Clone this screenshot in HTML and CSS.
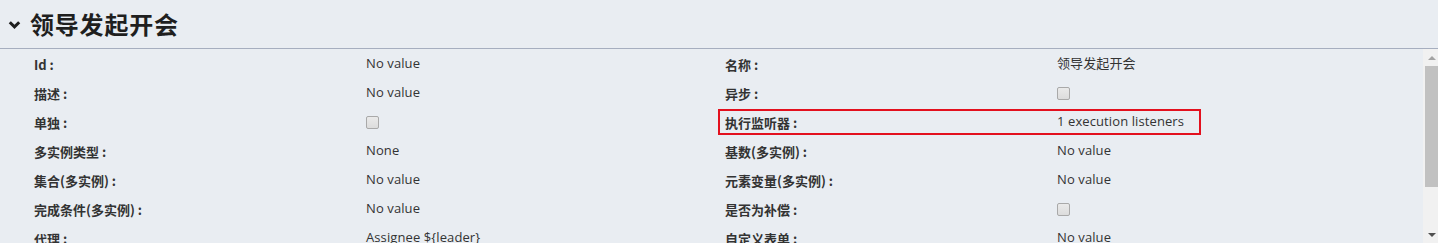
FILE: index.html
```html
<!DOCTYPE html>
<html lang="zh">
<head>
<meta charset="utf-8">
<title>领导发起开会</title>
<link rel="stylesheet" href="styles.css">
</head>
<body>
<div class="page">
  <header class="header">
    <svg class="chev" width="13" height="10" viewBox="0 0 13 10"><path d="M1.8 2.2 L6.5 6.9 L11.2 2.2" fill="none" stroke="#1e1e1e" stroke-width="3"/></svg>
    <h1 class="title">领导发起开会</h1>
  </header>
  <div class="body">
    <div class="content">
      <div class="grid">
        <div class="lab">Id :</div><div class="val">No value</div>
        <div class="lab">名称 :</div><div class="val cjk">领导发起开会</div>

        <div class="lab">描述 :</div><div class="val">No value</div>
        <div class="lab">异步 :</div><div class="val"><span class="cb"></span></div>

        <div class="lab">单独 :</div><div class="val"><span class="cb"></span></div>
        <div class="lab">执行监听器 :</div><div class="val">1 execution listeners</div>

        <div class="lab">多实例类型 :</div><div class="val">None</div>
        <div class="lab">基数(多实例) :</div><div class="val">No value</div>

        <div class="lab">集合(多实例) :</div><div class="val">No value</div>
        <div class="lab">元素变量(多实例) :</div><div class="val">No value</div>

        <div class="lab">完成条件(多实例) :</div><div class="val">No value</div>
        <div class="lab">是否为补偿 :</div><div class="val"><span class="cb"></span></div>

        <div class="lab">代理 :</div><div class="val">Assignee ${leader}</div>
        <div class="lab">自定义表单 :</div><div class="val">No value</div>
      </div>
      <div class="highlight"></div>
    </div>
    <div class="scrollbar">
      <div class="sb-btn"><span class="arr up"></span></div>
      <div class="sb-track"><div class="sb-thumb"></div></div>
      <div class="sb-btn"><span class="arr down"></span></div>
    </div>
  </div>
</div>
</body>
</html>
```

FILE: styles.css
```css
html, body {
  margin: 0;
  padding: 0;
  background: #e9edf2;
}
.page {
  width: 1438px;
  height: 243px;
  overflow: hidden;
  display: flex;
  flex-direction: column;
  font-family: "Open Sans", "Noto Sans CJK SC", sans-serif;
  color: #333;
}
.header {
  height: 48px;
  border-bottom: 1px solid #a6aebf;
  display: flex;
  align-items: center;
  padding-left: 8px;
  box-sizing: content-box;
}
.chev {
  margin-right: 9px;
  margin-top: 1px;
}
.title {
  margin: 0;
  font-family: "Noto Sans CJK SC", sans-serif;
  font-weight: 700;
  font-size: 24px;
  color: #1f1f1f;
  line-height: 48px;
  letter-spacing: 0.8px;
}
.body {
  flex: 1;
  display: flex;
  min-height: 0;
}
.content {
  flex: 1;
  position: relative;
  overflow: hidden;
}
.grid {
  display: grid;
  grid-template-columns: 332px 359px 332px 1fr;
  grid-auto-rows: 29px;
  padding-left: 34px;
}
.lab {
  font-family: "Noto Sans CJK SC", sans-serif;
  font-weight: 700;
  font-size: 13px;
  line-height: 29px;
  color: #333;
  margin-top: 1px;
}
.val {
  font-size: 13px;
  line-height: 29px;
  color: #333;
  display: flex;
  align-items: center;
  margin-top: -1px;
  letter-spacing: 0.1px;
}
.val.cjk {
  font-family: "Noto Sans CJK SC", sans-serif;
  margin-top: -2px;
}
.cb {
  display: inline-block;
  width: 11px;
  height: 11px;
  border: 1px solid #a9a9a9;
  border-radius: 2px;
  background: linear-gradient(#eaeaea, #dcdcdc);
  margin-top: 2px;
}
.highlight {
  position: absolute;
  left: 718px;
  top: 60px;
  width: 479px;
  height: 22px;
  border: 2px solid #e3101e;
}
.scrollbar {
  width: 15px;
  background: #f1f1f1;
  display: flex;
  flex-direction: column;
}
.sb-btn {
  height: 17px;
  display: flex;
  align-items: center;
  justify-content: center;
  padding-left: 2px;
}
.sb-track {
  flex: 1;
  padding-left: 2px;
}
.sb-thumb {
  height: 121px;
  background: #c1c1c1;
}
.arr {
  width: 0;
  height: 0;
  border-left: 4px solid transparent;
  border-right: 4px solid transparent;
}
.arr.up {
  border-bottom: 4px solid #a3a3a3;
}
.arr.down {
  border-top: 4px solid #505050;
}
```
